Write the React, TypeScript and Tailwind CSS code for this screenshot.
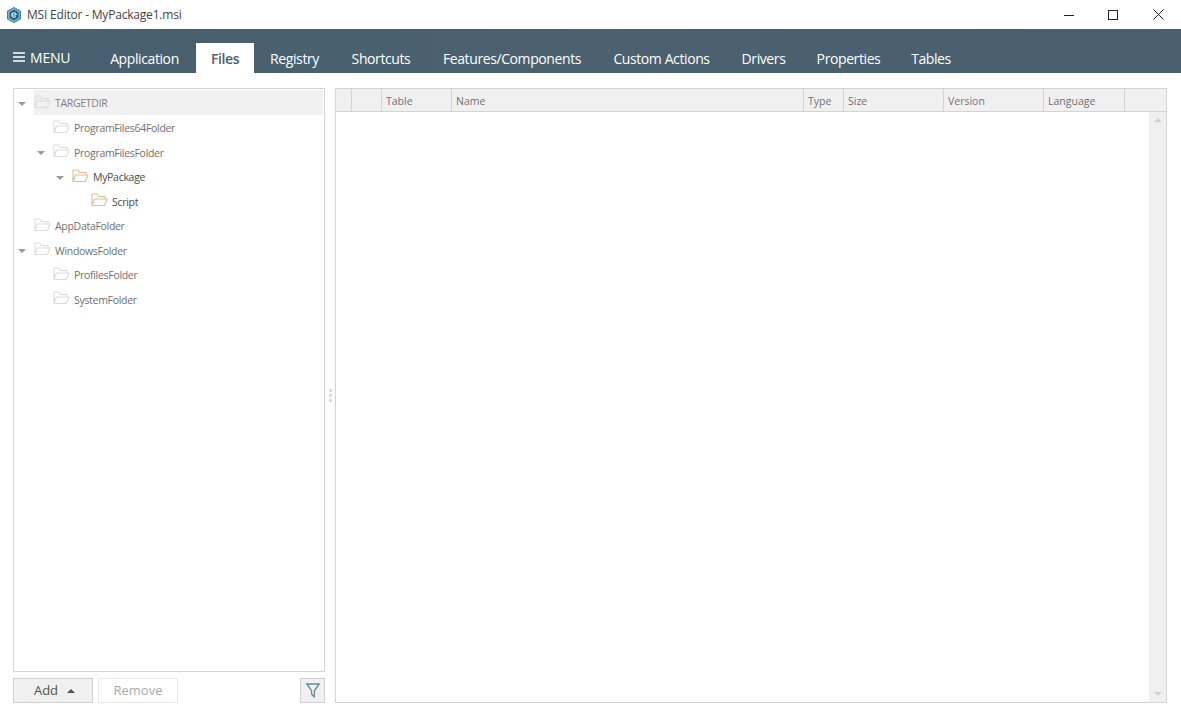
const font = "font-['Open_Sans','Noto_Sans',sans-serif]";

const tabs = [
  { label: "Application", width: "w-[103px]" },
  { label: "Files", width: "w-[58px]", active: true },
  { label: "Registry", width: "w-[81px]" },
  { label: "Shortcuts", width: "w-[92px]" },
  { label: "Features/Components", width: "w-[170px]" },
  { label: "Custom Actions", width: "w-[129px]" },
  { label: "Drivers", width: "w-[75px]" },
  { label: "Properties", width: "w-[95px]" },
  { label: "Tables", width: "w-[70px]" },
];

const tree = [
  { label: "TARGETDIR", depth: 0, open: true, selected: true },
  { label: "ProgramFiles64Folder", depth: 1 },
  { label: "ProgramFilesFolder", depth: 1, open: true },
  { label: "MyPackage", depth: 2, open: true, active: true },
  { label: "Script", depth: 3, active: true },
  { label: "AppDataFolder", depth: 0 },
  { label: "WindowsFolder", depth: 0, open: true },
  { label: "ProfilesFolder", depth: 1 },
  { label: "SystemFolder", depth: 1 },
];

const columns = [
  { label: "", width: "w-[16px]" },
  { label: "", width: "w-[30px]" },
  { label: "Table", width: "w-[70px]" },
  { label: "Name", width: "w-[352px]" },
  { label: "Type", width: "w-[40px]" },
  { label: "Size", width: "w-[100px]" },
  { label: "Version", width: "w-[100px]" },
  { label: "Language", width: "w-[81px]" },
];

const Logo = () => (
  <svg width="14" height="16" viewBox="0 0 14 16" fill="none">
    <path d="M7 0.5 13.500 4v8L7 15.500.5 12V4z" fill="#6fb0cf" stroke="#3d7f9f" />
    <path d="M7 2.800 11.400 5.200v5.600L7 13.200 2.600 10.800V5.200z" fill="#1f5f7d" />
    <path
      d="M4.800 8h4.400M9.200 8c0-1.300-1-2.200-2.200-2.200S4.800 6.800 4.800 8s1 2.200 2.200 2.200c.8 0 1.400-.3 1.900-.8"
      stroke="#e6f3f8"
      strokeWidth="1.100"
    />
  </svg>
);

const Folder = ({ active }: { active?: boolean }) => (
  <svg width="17" height="14" viewBox="0 0 17 14" fill="none" className="shrink-0">
    <path
      d="M1 12.500V1h5l1.500 2.500H14V6M1 12.500 3.500 6H16l-2.500 6.500z"
      stroke={active ? "#dcbf96" : "#dcdcdc"}
      strokeWidth="1.100"
    />
  </svg>
);

const Caret = ({ up }: { up?: boolean }) => (
  <svg width="8" height="4" viewBox="0 0 8 4" className="shrink-0">
    <path d={up ? "M4 0 8 4H0z" : "M0 0h8L4 4z"} fill="currentColor" />
  </svg>
);

const depthPad = ["pl-[4px]", "pl-[23px]", "pl-[42px]", "pl-[61px]"];

export default function App() {
  return (
    <div className={`${font} flex h-[716px] w-[1181px] flex-col overflow-hidden bg-white`}>
      {/* title bar */}
      <div className="flex h-[29px] items-center pl-[7px]">
        <Logo />
        <span className="ml-[6px] text-[12px] tracking-[-0.2px] text-[#444]">MSI Editor - MyPackage1.msi</span>
        <div className="ml-auto flex items-center pr-[17px]">
          <svg width="10" height="10" viewBox="0 0 10 10" className="mr-[34px]">
            <path d="M0 5.500h10" stroke="#222" />
          </svg>
          <svg width="10" height="10" viewBox="0 0 10 10" className="mr-[35px]">
            <rect x=".5" y=".5" width="9" height="9" fill="none" stroke="#222" />
          </svg>
          <svg width="11" height="11" viewBox="0 0 11 11">
            <path d="M.5.500l10 10M10.500.500l-10 10" stroke="#222" />
          </svg>
        </div>
      </div>

      {/* menu bar */}
      <div className="flex h-[44px] items-end bg-gradient-to-r from-[#475f6e] via-[#4b6170] to-[#4a5f6e] pl-[13px]">
        <div className="mr-[23px] flex h-full w-[57px] items-center gap-[5px] pt-[12px] text-[14px] tracking-[-0.2px] text-white">
          <svg width="12" height="10" viewBox="0 0 12 10" className="shrink-0">
            <path d="M0 1h12M0 5h12M0 9h12" stroke="#fff" strokeWidth="1.600" />
          </svg>
          MENU
        </div>
        {tabs.map((tab) => (
          <div
            key={tab.label}
            className={`flex h-[30px] items-center justify-center whitespace-nowrap text-[14px] tracking-[-0.4px] ${tab.width} ${
              tab.active ? "bg-white font-semibold text-[#4a5f6e]" : "text-white"
            }`}
          >
            {tab.label}
          </div>
        ))}
      </div>

      {/* content */}
      <div className="flex flex-1 pt-[15px] pl-[13px] pr-[14px] pb-[13px]">
        <div className="flex w-[312px] shrink-0 flex-col">
          <div className="flex-1 border border-[#d4d4d4] pt-[1px] pr-[1px]">
            {tree.map((row, i) => (
              <div key={row.label} className={`flex h-[24.5px] items-center ${depthPad[row.depth]}`}>
                <div className="flex w-[16px] shrink-0 pt-[4px] text-[#9a9a9a]">{row.open && <Caret />}</div>
                <div
                  className={`flex h-full flex-1 items-center gap-[4px] text-[10.500px] tracking-[-0.3px] ${
                    row.selected ? "bg-[#f1f1f1] text-[#808080]" : row.active ? "text-[#4a4a4a]" : "text-[#707070]"
                  }`}
                >
                  <Folder active={row.active} />
                  <span className={i === 0 ? "pt-[3px]" : "pt-[5px]"}>{row.label}</span>
                </div>
              </div>
            ))}
          </div>
          <div className="mt-[6px] flex h-[25px]">
            <button className="flex w-[80px] items-center justify-center gap-[9px] border border-[#cfcfcf] bg-[#f0f0f0] pl-[3px] text-[13px] text-[#505050]">
              Add
              <Caret up />
            </button>
            <button className="ml-[5px] w-[80px] border border-[#e8e8e8] text-[13px] text-[#aaa]">Remove</button>
            <button className="ml-auto flex w-[25px] items-center justify-center border border-[#cfcfcf] bg-[#f0f0f0]">
              <svg width="14" height="15" viewBox="0 0 14 15" fill="none">
                <path d="M.8 1h12.400L8.500 7.500 8.300 14 5.800 11.500 5.500 7.500z" stroke="#5f8d93" strokeWidth="1.300" />
              </svg>
            </button>
          </div>
        </div>

        {/* splitter */}
        <div className="flex w-[10px] shrink-0 flex-col items-center justify-center gap-[2px]">
          <div className="size-[3px] bg-[#dcdcdc]" />
          <div className="size-[3px] bg-[#dcdcdc]" />
          <div className="size-[3px] bg-[#dcdcdc]" />
        </div>

        <div className="flex flex-1 flex-col border border-[#d4d4d4]">
          <div className="flex h-[23px] shrink-0 border-b border-[#d4d4d4] bg-[#f0f0f0]">
            {columns.map((col, i) => (
              <div
                key={i}
                className={`flex items-center border-r border-[#d4d4d4] pl-[4px] pt-[3px] text-[10.500px] text-[#707070] ${col.width}`}
              >
                {col.label}
              </div>
            ))}
          </div>
          <div className="flex flex-1 justify-end">
            <div className="flex w-[17px] flex-col items-center justify-between bg-[#f0f0f0] py-[6px] text-[#d0d0d0]">
              <Caret up />
              <Caret />
            </div>
          </div>
        </div>
      </div>
    </div>
  );
}
